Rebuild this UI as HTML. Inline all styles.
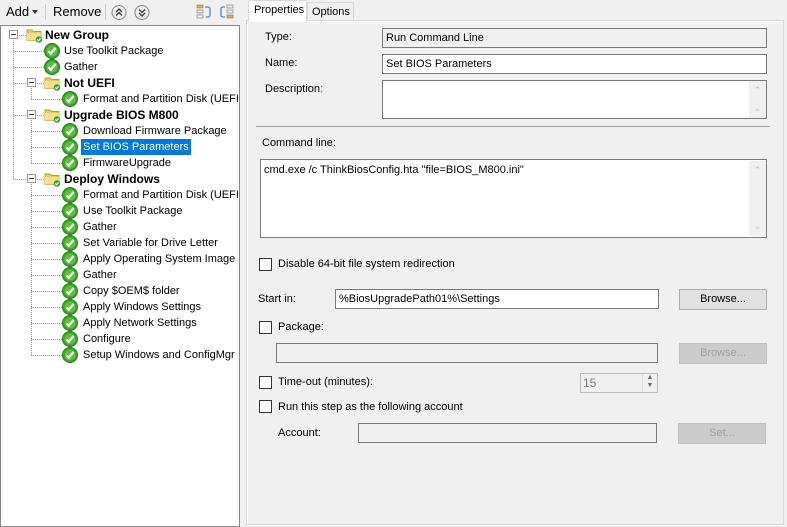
<!DOCTYPE html>
<html><head><meta charset="utf-8"><style>
*{box-sizing:border-box;margin:0;padding:0}
body{width:787px;height:527px;background:#f0f0f0;font-family:"Liberation Sans",sans-serif;font-size:11px;color:#000;position:relative;overflow:hidden}
.a{position:absolute;white-space:nowrap}
.tree{position:absolute;left:0;top:25px;width:240px;height:502px;background:#fff;border:1px solid #828790}
.clip{position:absolute;left:0;top:0;width:239px;height:527px;overflow:hidden}
.t{position:absolute;line-height:16px;white-space:nowrap;font-size:11px}
.b{font-weight:bold;font-size:12px!important}
.vl{position:absolute;border-left:1px dotted #999;width:0}
.hl{position:absolute;border-top:1px dotted #999;height:0}
.ex{position:absolute;width:9px;height:9px;border:1px solid #999;background:#fff}
.ex:after{content:"";position:absolute;left:1px;top:3px;width:5px;height:1px;background:#333}
.ck{position:absolute;width:16px;height:16px}
.box{position:absolute;border:1px solid #7a7a7a;background:#fff}
.cb{position:absolute;width:13px;height:13px;border:1px solid #333;background:#fff}
.btn{position:absolute;border:1px solid #adadad;background:#e1e1e1;text-align:center;line-height:18px}
.dis{background:#cccccc;border-color:#bfbfbf;color:#a0a0a0}
</style></head><body>
<div class="a" style="left:6px;top:4px;font-size:13px">Add</div>
<div class="a" style="left:32px;top:10px;border:3px solid transparent;border-top:4px solid #333;width:0;height:0"></div>
<div class="a" style="left:45px;top:4px;width:1px;height:16px;background:#ccc"></div>
<div class="a" style="left:53px;top:4px;font-size:13px">Remove</div>
<div class="a" style="left:105px;top:4px;width:1px;height:16px;background:#ccc"></div>
<svg class="a" style="left:111px;top:4px" width="40" height="17"><circle cx="8" cy="8.5" r="7" fill="#eee" stroke="#888"/><path d="M5 8l3-3 3 3M5 11.5l3-3 3 3" stroke="#333" fill="none" stroke-width="1.3"/><circle cx="31" cy="8.5" r="7" fill="#eee" stroke="#888"/><path d="M28 5.5l3 3 3-3M28 9l3 3 3-3" stroke="#333" fill="none" stroke-width="1.3"/></svg>
<svg class="a" style="left:196px;top:4px" width="40" height="17"><rect x="1" y="1" width="6" height="3" fill="#e8b030" stroke="#777" stroke-width=".6"/><rect x="1" y="6" width="6" height="3" fill="#eee" stroke="#777" stroke-width=".6"/><rect x="1" y="11" width="6" height="3" fill="#eee" stroke="#777" stroke-width=".6"/><path d="M9 3h3a2 2 0 0 1 2 2v6a2 2 0 0 1-2 2h-2" stroke="#3a8ad8" fill="none" stroke-width="1.3"/><path d="M29 3h-2a2 2 0 0 0-2 2v6a2 2 0 0 0 2 2h2" stroke="#3a8ad8" fill="none" stroke-width="1.3"/><rect x="31" y="1" width="6" height="3" fill="#eee" stroke="#777" stroke-width=".6"/><rect x="31" y="6" width="6" height="3" fill="#eee" stroke="#777" stroke-width=".6"/><rect x="31" y="11" width="6" height="3" fill="#e8b030" stroke="#777" stroke-width=".6"/></svg>

<div class="tree"></div>
<svg width="0" height="0" style="position:absolute"><defs>
<g id="chk"><circle cx="8" cy="8" r="7.5" fill="#3aa52a" stroke="#2a7a1e"/><circle cx="8" cy="8" r="5.5" fill="#58c040"/><path d="M4.5 8.2l2.3 2.6 4.8-6" stroke="#fff" stroke-width="2.2" fill="none"/></g>
<g id="fld"><path d="M1 3h5l1.5 1.5H15v9H1z" fill="#e8c860" stroke="#b89a40"/><path d="M1 6h14v7.5H1z" fill="#f6e08a"/><circle cx="13" cy="12.5" r="3.3" fill="#3aa52a"/><path d="M11.3 12.5l1.2 1.3 2-2.4" stroke="#fff" stroke-width="1.2" fill="none"/></g>
</defs></svg>
<div class="clip">
<div class="vl" style="left:13px;top:40px;height:139px"></div>
<div class="vl" style="left:31px;top:88px;height:11px"></div>
<div class="vl" style="left:31px;top:120px;height:43px"></div>
<div class="vl" style="left:31px;top:184px;height:171px"></div>
<div id="rows"></div>
</div>
<script>
var rows=[[35,0,'f','New Group'],[51,1,'c','Use Toolkit Package'],[67,1,'c','Gather'],[83,1,'f','Not UEFI'],[99,2,'c','Format and Partition Disk (UEFI)'],[115,1,'f','Upgrade BIOS M800'],[131,2,'c','Download Firmware Package'],[147,2,'c','Set BIOS Parameters'],[163,2,'c','FirmwareUpgrade'],[179,1,'f','Deploy Windows'],[195,2,'c','Format and Partition Disk (UEFI)'],[211,2,'c','Use Toolkit Package'],[227,2,'c','Gather'],[243,2,'c','Set Variable for Drive Letter'],[259,2,'c','Apply Operating System Image'],[275,2,'c','Gather'],[291,2,'c','Copy $OEM$ folder'],[307,2,'c','Apply Windows Settings'],[323,2,'c','Apply Network Settings'],[339,2,'c','Configure'],[355,2,'c','Setup Windows and ConfigMgr']];
var h='';
rows.forEach(function(r){var y=r[0],l=r[1],f=r[2]=='f';
var ix=l==0?26:(l==1?44:62); var tx=l==0?45:(l==1?64:83);
var px=l==0?13:(l==1?13:31);
if(l>0)h+='<div class="hl" style="left:'+px+'px;top:'+y+'px;width:'+(ix-px)+'px"></div>';
if(f){var ex=l==0?9:27;h+='<div class="ex" style="left:'+ex+'px;top:'+(y-5)+'px"></div>';
 h+='<div class="hl" style="left:'+(ex+10)+'px;top:'+y+'px;width:7px"></div>';}
h+='<svg class="ck" style="left:'+ix+'px;top:'+(y-8)+'px" width="16" height="16"><use href="#'+(f?'fld':'chk')+'"/></svg>';
var sel=r[3]=='Set BIOS Parameters';
h+='<div class="t'+(f?' b':'')+'" style="left:'+(tx-2)+'px;top:'+(y-8)+'px;padding:0 2px;'+(sel?'background:#0078d7;color:#fff;':'')+'">'+r[3].replace('$','&#36;')+'</div>';});
document.getElementById('rows').innerHTML=h;
</script>

<div class="a" style="left:246px;top:20px;width:538px;height:505px;border:1px solid #d9d9d9;background:#f0f0f0;box-shadow:inset 1px 1px 0 #fff"></div>
<div class="a" style="left:248px;top:0;width:59px;height:21px;background:#fff;border:1px solid #d9d9d9;border-bottom:none;padding:3px 0 0 5px;font-size:11px">Properties</div>
<div class="a" style="left:307px;top:2px;width:47px;height:18px;background:#f0f0f0;border:1px solid #d9d9d9;border-bottom:none;padding:3px 0 0 4px;font-size:11px">Options</div>

<div class="a" style="left:265px;top:31px">Type:</div>
<div class="box" style="left:382px;top:28px;width:385px;height:20px;background:#f0f0f0;padding:3px 0 0 3px">Run Command Line</div>
<div class="a" style="left:265px;top:57px">Name:</div>
<div class="box" style="left:382px;top:54px;width:385px;height:20px;padding:3px 0 0 3px">Set BIOS Parameters</div>
<div class="a" style="left:265px;top:83px">Description:</div>
<div class="box" style="left:382px;top:80px;width:385px;height:39px"><div class="a" style="right:0;top:0;width:17px;height:37px;background:#f0f0f0;color:#c0c0c0;font-size:9px;text-align:center;line-height:18px">&#8963;<br>&#8964;</div></div>
<div class="a" style="left:256px;top:126px;width:514px;height:1px;background:#a0a0a0"></div>
<div class="a" style="left:262px;top:137px">Command line:</div>
<div class="box" style="left:260px;top:159px;width:507px;height:79px;padding:4px 0 0 3px">cmd.exe /c ThinkBiosConfig.hta "file=BIOS_M800.ini"<div class="a" style="right:0;top:1px;width:17px;height:75px;background:#f0f0f0;color:#c0c0c0;font-size:9px;text-align:center"><div style="margin-top:4px">&#8963;</div><div style="margin-top:45px">&#8964;</div></div></div>

<div class="cb" style="left:259px;top:258px"></div>
<div class="a" style="left:278px;top:258px">Disable 64-bit file system redirection</div>
<div class="a" style="left:258px;top:293px">Start in:</div>
<div class="box" style="left:335px;top:289px;width:324px;height:20px;padding:3px 0 0 3px">%BiosUpgradePath01%\Settings</div>
<div class="btn" style="left:679px;top:289px;width:88px;height:21px">Browse...</div>
<div class="cb" style="left:259px;top:321px"></div>
<div class="a" style="left:278px;top:321px">Package:</div>
<div class="box" style="left:276px;top:343px;width:382px;height:20px;background:#f0f0f0"></div>
<div class="btn dis" style="left:679px;top:343px;width:88px;height:21px">Browse...</div>
<div class="cb" style="left:259px;top:376px"></div>
<div class="a" style="left:278px;top:376px">Time-out (minutes):</div>
<div class="box" style="left:580px;top:373px;width:78px;height:20px;background:#f0f0f0;border-color:#bbb;color:#777;padding:2px 0 0 2px;font-size:12px">15<div class="a" style="right:0;top:0;width:15px;height:18px;border-left:1px solid #ddd;font-size:7px;color:#666;text-align:center;line-height:8px">&#9650;<br>&#9660;</div></div>
<div class="cb" style="left:259px;top:400px"></div>
<div class="a" style="left:278px;top:401px">Run this step as the following account</div>
<div class="a" style="left:278px;top:427px">Account:</div>
<div class="box" style="left:358px;top:423px;width:299px;height:20px;background:#f0f0f0"></div>
<div class="btn dis" style="left:678px;top:423px;width:88px;height:21px">Set...</div>
</body></html>
